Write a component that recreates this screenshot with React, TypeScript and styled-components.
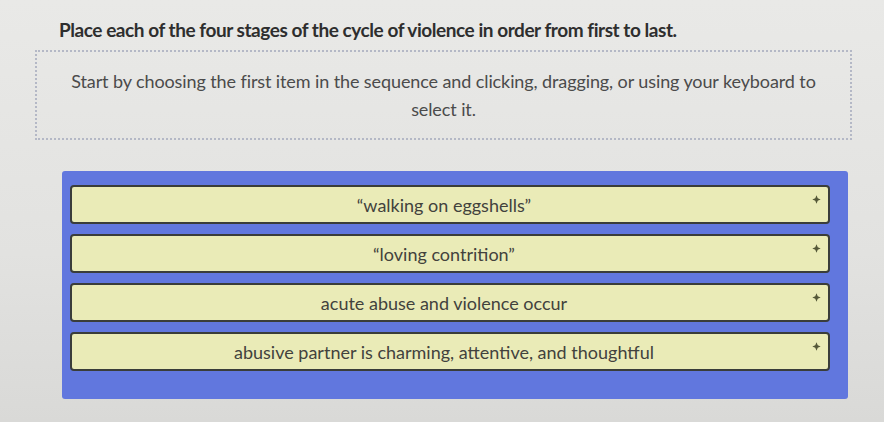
import React from 'react';
import styled, { createGlobalStyle } from 'styled-components';

const GlobalStyle = createGlobalStyle`
  html, body {
    margin: 0;
    padding: 0;
    background: #e3e3e1;
  }
  body {
    font-family: Lato, "Open Sans", sans-serif;
  }
`;

const Page = styled.div`
  width: 884px;
  height: 422px;
  box-sizing: border-box;
  padding: 18px 32px 0 35px;
  background: linear-gradient(180deg, #e9e9e7 0%, #e2e2e0 60%, #d9d9d7 100%);
  overflow: hidden;
`;

const Title = styled.h1`
  margin: 0 0 9px 24px;
  font-size: 19px;
  font-weight: 700;
  color: #2e2e2e;
  letter-spacing: -0.45px;
`;

const Hint = styled.div`
  box-sizing: border-box;
  width: 817px;
  height: 90px;
  border: 2px dotted #b4b8c6;
  display: flex;
  align-items: center;
  justify-content: center;
  text-align: center;
  padding: 0 34px;
  font-size: 18px;
  line-height: 28px;
  color: #4b4b4b;
  letter-spacing: -0.1px;
`;

const Panel = styled.div`
  margin: 31px 0 0 27px;
  width: 786px;
  box-sizing: border-box;
  padding: 14px 18px 28px 8px;
  background: #6177de;
  border-radius: 3px;
  display: flex;
  flex-direction: column;
  gap: 10px;
`;

const Item = styled.div`
  position: relative;
  height: 39px;
  box-sizing: border-box;
  border: 2px solid #3a3d3a;
  border-radius: 4px;
  background: #eaebb7;
  display: flex;
  align-items: center;
  justify-content: center;
  padding-right: 12px;
  font-size: 18px;
  color: #42423d;
`;

const Handle = styled.svg`
  position: absolute;
  top: 8px;
  right: 7px;
  width: 9px;
  height: 9px;
`;

const items = [
  '“walking on eggshells”',
  '“loving contrition”',
  'acute abuse and violence occur',
  'abusive partner is charming, attentive, and thoughtful',
];

export default function App() {
  return (
    <>
      <GlobalStyle />
      <Page>
        <Title>Place each of the four stages of the cycle of violence in order from first to last.</Title>
        <Hint>
          Start by choosing the first item in the sequence and clicking, dragging, or using your keyboard to select it.
        </Hint>
        <Panel>
          {items.map((t) => (
            <Item key={t}>
              {t}
              <Handle viewBox="0 0 8 8">
                <path d="M4 0.3 L5.1 2.9 L7.7 4 L5.1 5.1 L4 7.7 L2.9 5.1 L0.3 4 L2.9 2.9 Z" fill="#545738" />
              </Handle>
            </Item>
          ))}
        </Panel>
      </Page>
    </>
  );
}
